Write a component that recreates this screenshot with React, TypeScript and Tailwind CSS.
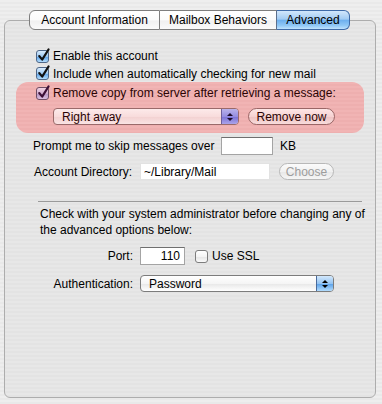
import React from "react";

type Tint = "blue" | "pink";

function CheckBox({ checked = false, tint = "blue" }: { checked?: boolean; tint?: Tint }) {
  const box = !checked
    ? "border-[#7d7d7d] bg-[linear-gradient(to_bottom,#ffffff,#f4f4f4_50%,#e6e6e6_55%,#fafafa)]"
    : tint === "pink"
      ? "border-[#6e4c63] bg-[linear-gradient(to_bottom,#f0d2e2,#d2aed0_50%,#b796c4_55%,#dcbfe0)]"
      : "border-[#4f6788] bg-[linear-gradient(to_bottom,#d9ecfd,#9cc9f3_50%,#62a6ea_55%,#b3ddfd)]";
  return (
    <span className={`relative block flex-none w-[13px] h-[13px] rounded-[3px] border ${box}`}>
      {checked && (
        <svg className="absolute left-[0px] top-[-2px] overflow-visible" width="13" height="13" viewBox="0 0 13 13">
          <path
            d="M2.2 7 L5.2 10.6 L11.6 0.4"
            fill="none"
            stroke={tint === "pink" ? "#3d1036" : "#111"}
            strokeWidth="2.1"
            strokeLinecap="round"
            strokeLinejoin="round"
          />
        </svg>
      )}
    </span>
  );
}

function Arrows({ color = "#000" }: { color?: string }) {
  return (
    <div className="flex flex-col items-center justify-center gap-[2px]">
      <svg width="6" height="3" viewBox="0 0 6 3">
        <path d="M0 3 L3 0 L6 3Z" fill={color} />
      </svg>
      <svg width="6" height="3" viewBox="0 0 6 3">
        <path d="M0 0 L3 3 L6 0Z" fill={color} />
      </svg>
    </div>
  );
}

function Popup({ label, pink = false, className }: { label: string; pink?: boolean; className: string }) {
  return (
    <div
      className={`flex h-[17px] rounded-[4px] border overflow-hidden ${className} ${
        pink
          ? "border-[#9a6a6a] bg-[linear-gradient(to_bottom,#fdeaea,#f8dcdc_50%,#f3d2d2_55%,#fae4e4)] text-[#2b0404]"
          : "border-[#7c7c7c] bg-[linear-gradient(to_bottom,#ffffff,#f5f5f5_50%,#e9e9e9_55%,#ffffff)]"
      }`}
    >
      <div className="flex-1 flex items-center pl-[8px]">{label}</div>
      <div
        className={`w-[17px] flex items-center justify-center border-l ${
          pink
            ? "border-[#6d5f9a] bg-[linear-gradient(to_bottom,#b9b2ea,#958de0_50%,#7d74d6_55%,#aaa3ea)]"
            : "border-[#4a6b9c] bg-[linear-gradient(to_bottom,#d3e8fc,#94c4f2_50%,#5fa4ea_55%,#b2dcfd)]"
        }`}
      >
        <Arrows color={pink ? "#1c0d2c" : "#000"} />
      </div>
    </div>
  );
}

export default function App() {
  return (
    <div className="w-[382px] h-[404px] pt-[10px] overflow-hidden text-[12px] leading-none text-black font-['Liberation_Sans',Arial,sans-serif] bg-[repeating-linear-gradient(to_bottom,#eeeeee_0px,#eeeeee_2px,#e9e9e9_2px,#e9e9e9_4px)]">
      {/* tabs */}
      <div className="relative z-10 flex h-[20px] ml-[29px] w-[321px]">
        <div className="w-[131px] flex items-center justify-center rounded-l-[6px] border border-[#7e7e7e] bg-[linear-gradient(to_bottom,#ffffff,#fbfbfb_50%,#f0f0f0_55%,#fafafa)]">
          Account Information
        </div>
        <div className="w-[117px] flex items-center justify-center border-y border-r border-[#7e7e7e] border-r-[#5c6f8c] bg-[linear-gradient(to_bottom,#ffffff,#fbfbfb_50%,#f0f0f0_55%,#fafafa)]">
          Mailbox Behaviors
        </div>
        <div className="w-[73px] flex items-center justify-center rounded-r-[6px] border-y border-r border-[#3e6aa8] bg-[linear-gradient(to_bottom,#d2e7fc,#a2cbf3_45%,#6eb0ee_52%,#8fc7f6_80%,#bfe3ff)]">
          Advanced
        </div>
      </div>

      {/* panel */}
      <div className="-mt-[10px] ml-[4px] w-[372px] h-[378px] rounded-[6px] border border-[#adadad] pt-[26px] bg-[repeating-linear-gradient(to_bottom,#e7e7e7_0px,#e7e7e7_2px,#e3e3e3_2px,#e3e3e3_4px)]">
        <div className="flex items-center h-[18px] pl-[31px]">
          <CheckBox checked />
          <span className="ml-[4px]">Enable this account</span>
        </div>
        <div className="flex items-center h-[17px] pl-[31px]">
          <CheckBox checked />
          <span className="ml-[4px]">Include when automatically checking for new mail</span>
        </div>

        <div className="ml-[11px] w-[348px] rounded-[12px] pt-[2px] pb-[8px] text-[#2b0404] bg-[repeating-linear-gradient(to_bottom,#f1b4b4_0px,#f1b4b4_2px,#eeafaf_2px,#eeafaf_4px)]">
          <div className="flex items-center h-[18px] pl-[20px]">
            <CheckBox checked tint="pink" />
            <span className="ml-[4px]">Remove copy from server after retrieving a message:</span>
          </div>
          <div className="flex items-center mt-[6px] pl-[37px]">
            <Popup label="Right away" pink className="w-[186px]" />
            <div className="ml-[9px] w-[87px] h-[17px] flex items-center justify-center rounded-full border border-[#9a6666] bg-[linear-gradient(to_bottom,#fde6e6,#f6d2d2_50%,#efc4c4_55%,#f8dcdc)]">
              Remove now
            </div>
          </div>
        </div>

        <div className="flex items-center h-[18px] mt-[4px] pl-[28px]">
          <span className="w-[188px] flex-none">Prompt me to skip messages over</span>
          <div className="w-[52px] h-[18px] bg-white border border-[#a4a4a4] border-t-[#6f6f6f]" />
          <span className="ml-[7px]">KB</span>
        </div>

        <div className="flex items-center h-[17px] mt-[8px] pl-[29px]">
          <span className="w-[106px] flex-none">Account Directory:</span>
          <div className="w-[130px] h-[17px] flex items-center pl-[3px] bg-white border border-[#e2e2e2]">~/Library/Mail</div>
          <div className="ml-[9px] w-[55px] h-[17px] flex items-center justify-center rounded-full border border-[#b8b8b8] text-[#9d9d9d] bg-[linear-gradient(to_bottom,#fbfbfb,#f1f1f1_50%,#e8e8e8_55%,#f6f6f6)]">
            Choose
          </div>
        </div>

        <div className="mt-[21px] ml-[33px] w-[324px] h-px bg-[#9a9a9a]" />

        <p className="mt-[4px] pl-[35px] leading-[16px]">
          Check with your system administrator before changing any of
          <br />
          the advanced options below:
        </p>

        <div className="flex items-center h-[18px] mt-[9px] pl-[35px]">
          <span className="w-[93px] flex-none text-right">Port:</span>
          <div className="ml-[7px] w-[45px] h-[18px] flex items-center justify-end pr-[4px] bg-white border border-[#a4a4a4] border-t-[#6f6f6f]">
            110
          </div>
          <span className="flex ml-[10px]">
            <CheckBox />
          </span>
          <span className="ml-[4px]">Use SSL</span>
        </div>

        <div className="flex items-center h-[17px] mt-[10px] pl-[35px]">
          <span className="w-[93px] flex-none text-right">Authentication:</span>
          <Popup label="Password" className="ml-[7px] w-[194px]" />
        </div>
      </div>
    </div>
  );
}
